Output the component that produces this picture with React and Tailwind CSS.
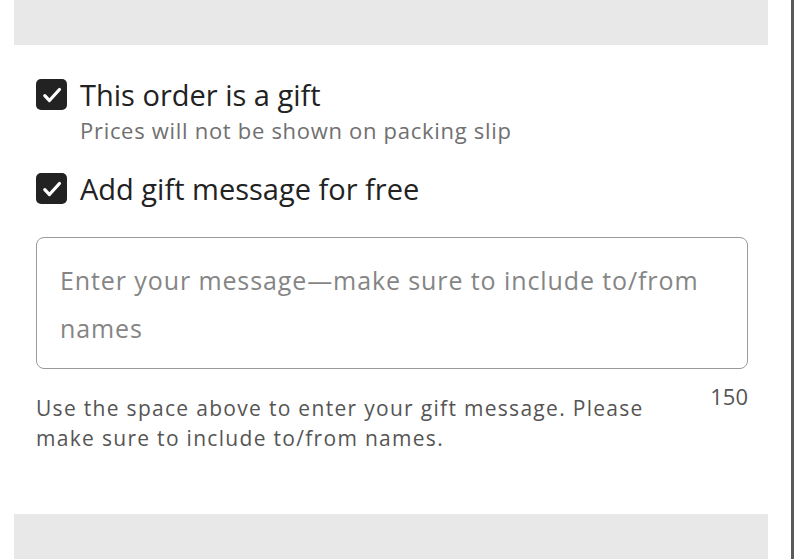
import React from "react"

function Check() {
  return (
    <div className="w-[31px] h-[31px] rounded-[5px] bg-[#222222] flex items-center justify-center shrink-0">
      <svg width="24" height="24" viewBox="0 0 20 20" fill="none">
        <path d="M4 10.6l3.9 4L16.2 5.4" stroke="white" strokeWidth="2.7" strokeLinecap="round" strokeLinejoin="round" />
      </svg>
    </div>
  )
}

export default function App() {
  return (
    <div className="w-[794px] h-[559px] flex bg-white" style={{ fontFamily: "'Open Sans', 'Liberation Sans', sans-serif" }}>
      <div className="w-[14px] bg-white" />
      <div className="w-[754px] flex flex-col">
        <div className="h-[45px] bg-[#e8e8e8]" />
        <div className="flex-1 bg-white pl-[22px] pr-[20px] pt-[34px]">
          {/* gift option */}
          <div className="flex items-center gap-[13px]">
            <Check />
            <span className="text-[29px] text-[#222222] leading-none">This order is a gift</span>
          </div>
          <div className="pl-[44px] mt-[10px] text-[22px] tracking-[0.7px] text-[#707070] leading-[21px]">
            Prices will not be shown on packing slip
          </div>

          <div className="flex items-center gap-[13px] mt-[32px]">
            <Check />
            <span className="text-[29px] text-[#222222] leading-none">Add gift message for free</span>
          </div>

          {/* message box */}
          <div className="mt-[33px] h-[132px] border border-[#9a9a9a] rounded-[8px] px-[23px] pt-[18px]">
            <div className="text-[25px] tracking-[0.9px] leading-[48px] text-[#858585]">
              Enter your message—make sure to include to/from
              <br />
              names
            </div>
          </div>

          <div className="flex justify-between items-start mt-[17px]">
            <div className="text-[21px] tracking-[1.3px] leading-[30px] text-[#555555] w-[660px] pt-[7px]">
              Use the space above to enter your gift message. Please make sure to include to/from names.
            </div>
            <div className="text-[22px] leading-[20px] text-[#555555]">150</div>
          </div>
        </div>
        <div className="h-[45px] bg-[#e8e8e8]" />
      </div>
      <div className="w-[23px] bg-white" />
      <div className="w-[3px] bg-[#5a5a5a]" />
    </div>
  )
}
